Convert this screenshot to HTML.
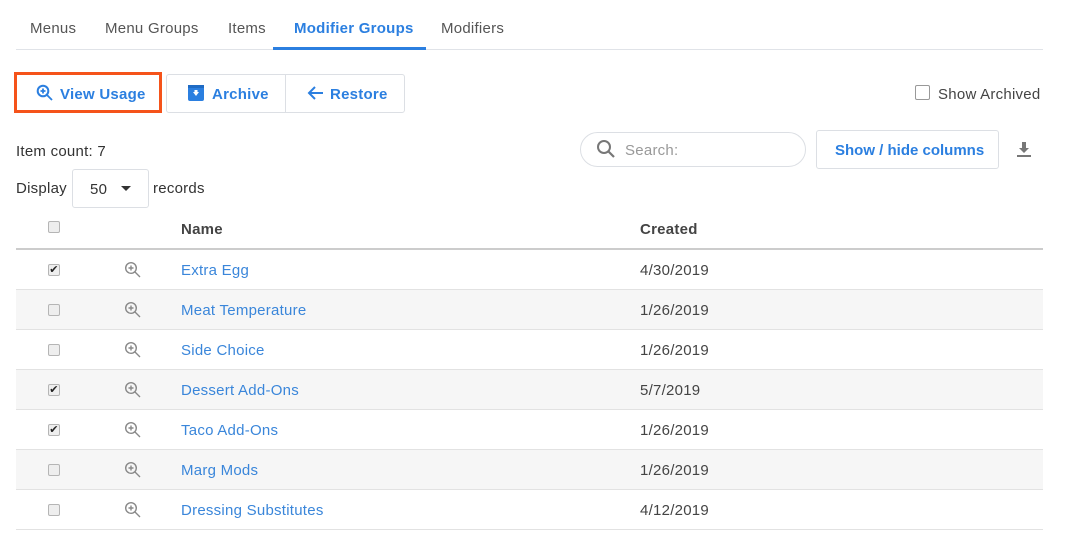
<!DOCTYPE html>
<html><head><meta charset="utf-8"><style>
*{box-sizing:border-box;margin:0;padding:0}
body{width:1076px;height:552px;background:#fff;font-family:"Liberation Sans",sans-serif;font-size:15px;color:#444;position:relative;overflow:hidden;letter-spacing:0.25px}
.a{position:absolute;white-space:nowrap}
.tab{top:20px;color:#555}
.blue{color:#2b7fe0}
.b{font-weight:bold}
.row{position:absolute;left:16px;width:1027px;height:40px;border-bottom:1px solid #e2e2e2}
.row.g{background:#f6f6f6}
.cb{position:absolute;width:12px;height:12px;border:1px solid #b5b5b5;border-radius:2px;background:#eee}
.row .cb{left:32px;top:14px}
.row .zi{position:absolute;left:108px;top:11px}
.row .n{position:absolute;left:165px;top:12px;color:#3a86da}
.row .d{position:absolute;left:624px;top:12px;color:#444}
</style></head><body>
<div class="a tab" style="left:30px">Menus</div>
<div class="a tab" style="left:105px">Menu Groups</div>
<div class="a tab" style="left:228px">Items</div>
<div class="a tab blue b" style="left:294px">Modifier Groups</div>
<div class="a tab" style="left:441px">Modifiers</div>
<div class="a" style="left:16px;top:49px;width:1027px;height:1px;background:#e0e3e8"></div>
<div class="a" style="left:273px;top:47px;width:153px;height:3px;background:#2b7fe0"></div>

<div class="a" style="left:14px;top:72px;width:148px;height:41px;border:3px solid #f5531a"></div>
<svg class="a" style="left:36px;top:84px" width="18" height="18" viewBox="0 0 18 18"><circle cx="7" cy="7" r="5.3" fill="none" stroke="#2b7fe0" stroke-width="2"/><path d="M11 11l5 5M7 4.5v5M4.5 7h5" stroke="#2b7fe0" stroke-width="1.8"/></svg>
<div class="a blue b" style="left:60px;top:86px">View Usage</div>

<div class="a" style="left:166px;top:74px;width:239px;height:39px;border:1px solid #dcdfe4;border-radius:3px"></div>
<div class="a" style="left:285px;top:74px;width:1px;height:39px;background:#dcdfe4"></div>
<svg class="a" style="left:188px;top:85px" width="16" height="16" viewBox="0 0 16 16"><rect x="0" y="0" width="16" height="16" rx="2" fill="#2b7fe0"/><rect x="0" y="0" width="16" height="3" fill="#1f6bc4"/><path d="M5 7h6l-3 4z" fill="#fff"/><rect x="6.5" y="5" width="3" height="3" fill="#fff"/></svg>
<div class="a blue b" style="left:212px;top:86px">Archive</div>
<svg class="a" style="left:306px;top:85px" width="18" height="16" viewBox="0 0 18 16"><path d="M17 8H3M9 2L3 8l6 6" fill="none" stroke="#2b7fe0" stroke-width="2"/></svg>
<div class="a blue b" style="left:330px;top:86px">Restore</div>

<div class="a" style="left:915px;top:85px;width:15px;height:15px;border:1px solid #999;border-radius:2px"></div>
<div class="a" style="left:938px;top:86px;color:#444">Show Archived</div>

<div class="a" style="left:16px;top:143px;color:#333">Item count: 7</div>
<div class="a" style="left:580px;top:132px;width:226px;height:35px;border:1px solid #dcdfe4;border-radius:18px"></div>
<svg class="a" style="left:596px;top:139px" width="20" height="20" viewBox="0 0 20 20"><circle cx="8" cy="8" r="6" fill="none" stroke="#777" stroke-width="2"/><path d="M12.5 12.5l5.5 5.5" stroke="#777" stroke-width="2.2"/></svg>
<div class="a" style="left:625px;top:142px;color:#999">Search:</div>
<div class="a" style="left:816px;top:130px;width:183px;height:39px;border:1px solid #dcdfe4;border-radius:3px"></div>
<div class="a blue b" style="left:835px;top:142px;letter-spacing:0">Show / hide columns</div>
<svg class="a" style="left:1016px;top:141px" width="16" height="17" viewBox="0 0 16 17"><path d="M6 1h4v6h3l-5 5-5-5h3z" fill="#777"/><rect x="1" y="14" width="14" height="2" fill="#777"/></svg>

<div class="a" style="left:16px;top:180px;color:#333">Display</div>
<div class="a" style="left:72px;top:169px;width:77px;height:39px;border:1px solid #dcdfe4;border-radius:3px"></div>
<div class="a" style="left:90px;top:181px;color:#333">50</div>
<div class="a" style="left:121px;top:186px;border-left:5px solid transparent;border-right:5px solid transparent;border-top:5px solid #333;width:0;height:0"></div>
<div class="a" style="left:153px;top:180px;color:#333">records</div>

<div class="cb" style="left:48px;top:221px"></div>
<div class="a b" style="left:181px;top:221px;color:#444">Name</div>
<div class="a b" style="left:640px;top:221px;color:#444">Created</div>
<div class="a" style="left:16px;top:248px;width:1027px;height:2px;background:#ccc"></div>

<div class="row" style="top:250px"><div class="cb" style="text-align:center;font-size:11px;line-height:10px;color:#222">✔</div><svg class="zi" width="18" height="18" viewBox="0 0 18 18"><circle cx="7" cy="7" r="5.3" fill="none" stroke="#888" stroke-width="1.4"/><path d="M11 11l5 5M7 4.5v5M4.5 7h5" stroke="#888" stroke-width="1.4"/></svg><div class="n">Extra Egg</div><div class="d">4/30/2019</div></div>
<div class="row g" style="top:290px"><div class="cb"></div><svg class="zi" width="18" height="18" viewBox="0 0 18 18"><circle cx="7" cy="7" r="5.3" fill="none" stroke="#888" stroke-width="1.4"/><path d="M11 11l5 5M7 4.5v5M4.5 7h5" stroke="#888" stroke-width="1.4"/></svg><div class="n">Meat Temperature</div><div class="d">1/26/2019</div></div>
<div class="row" style="top:330px"><div class="cb"></div><svg class="zi" width="18" height="18" viewBox="0 0 18 18"><circle cx="7" cy="7" r="5.3" fill="none" stroke="#888" stroke-width="1.4"/><path d="M11 11l5 5M7 4.5v5M4.5 7h5" stroke="#888" stroke-width="1.4"/></svg><div class="n">Side Choice</div><div class="d">1/26/2019</div></div>
<div class="row g" style="top:370px"><div class="cb" style="text-align:center;font-size:11px;line-height:10px;color:#222">✔</div><svg class="zi" width="18" height="18" viewBox="0 0 18 18"><circle cx="7" cy="7" r="5.3" fill="none" stroke="#888" stroke-width="1.4"/><path d="M11 11l5 5M7 4.5v5M4.5 7h5" stroke="#888" stroke-width="1.4"/></svg><div class="n">Dessert Add-Ons</div><div class="d">5/7/2019</div></div>
<div class="row" style="top:410px"><div class="cb" style="text-align:center;font-size:11px;line-height:10px;color:#222">✔</div><svg class="zi" width="18" height="18" viewBox="0 0 18 18"><circle cx="7" cy="7" r="5.3" fill="none" stroke="#888" stroke-width="1.4"/><path d="M11 11l5 5M7 4.5v5M4.5 7h5" stroke="#888" stroke-width="1.4"/></svg><div class="n">Taco Add-Ons</div><div class="d">1/26/2019</div></div>
<div class="row g" style="top:450px"><div class="cb"></div><svg class="zi" width="18" height="18" viewBox="0 0 18 18"><circle cx="7" cy="7" r="5.3" fill="none" stroke="#888" stroke-width="1.4"/><path d="M11 11l5 5M7 4.5v5M4.5 7h5" stroke="#888" stroke-width="1.4"/></svg><div class="n">Marg Mods</div><div class="d">1/26/2019</div></div>
<div class="row" style="top:490px"><div class="cb"></div><svg class="zi" width="18" height="18" viewBox="0 0 18 18"><circle cx="7" cy="7" r="5.3" fill="none" stroke="#888" stroke-width="1.4"/><path d="M11 11l5 5M7 4.5v5M4.5 7h5" stroke="#888" stroke-width="1.4"/></svg><div class="n">Dressing Substitutes</div><div class="d">4/12/2019</div></div>
</body></html>
